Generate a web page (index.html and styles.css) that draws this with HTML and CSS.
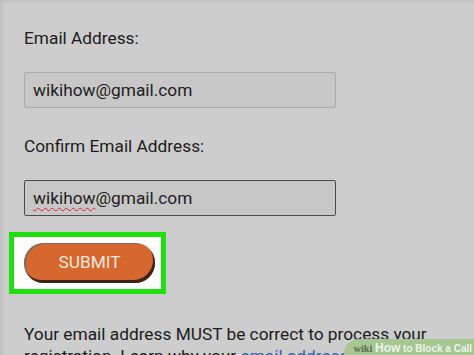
FILE: index.html
```html
<!DOCTYPE html>
<html lang="en">
<head>
<meta charset="utf-8"/>
<meta content="width=device-width, initial-scale=1.0" name="viewport"/>
<title>Register</title>
<link rel="stylesheet" href="styles.css">
</head>
<body>
<div class="page">
<div class="form">
<div class="label">Email Address:</div>
<div class="field">wikihow@gmail.com</div>
<div class="label">Confirm Email Address:</div>
<div class="field focused"><span class="typo">wikihow</span>@gmail.com</div>
<div class="highlight">
<button class="submit">SUBMIT</button>
</div>
<p class="note">Your email address MUST be correct to process your registration. Learn why your <a href="#">email address</a> is important.</p>
</div>
<div class="badge"><span class="wiki">wiki</span> <span class="how">How</span> to Block a Call</div>
</div>
</body>
</html>
```
FILE: styles.css
```css
html, body {
    margin: 0;
    padding: 0;
}
body {
    font-family: Roboto, "Noto Sans", sans-serif;
    background-color: #cdcdcd;
    color: #1c1c1c;
    overflow: hidden;
}
.page {
    position: relative;
    width: 474px;
    height: 355px;
    overflow: hidden;
    box-shadow: inset 3px 2px 3px rgba(0, 0, 0, 0.06);
}
.form {
    padding: 27px 24px 0 24px;
}
.label {
    font-size: 17.3px;
    line-height: 22px;
    margin-bottom: 23px;
}
.field {
    box-sizing: border-box;
    width: 312px;
    height: 36px;
    padding: 0 8px;
    background-color: #c7c7c7;
    border: 1px solid #a9a9a9;
    border-radius: 2px;
    font-size: 17.3px;
    line-height: 34px;
    color: #1e1e1e;
    margin-bottom: 27px;
}
.field.focused {
    border: 1px solid #4a4a4a;
    margin-bottom: 16px;
}
.typo {
    text-decoration: underline wavy #d23;
    text-decoration-thickness: 1px;
    text-underline-offset: 3px;
}
.highlight {
    box-sizing: border-box;
    width: 157px;
    height: 62px;
    margin-left: -15px;
    border: 5px solid #1ee010;
    background-color: #fff;
    padding: 6px 0 0 10px;
}
.submit {
    box-sizing: border-box;
    width: 131px;
    height: 40px;
    border: none;
    border-radius: 20px;
    background-color: #d5672f;
    color: #f6e8dc;
    font-family: Roboto, "Noto Sans", sans-serif;
    font-size: 17.3px;
    box-shadow: inset -2px -3px 0 #3a2418, inset 2px 1px 0 #8a6a5a;
    padding: 0 0 2px 0;
}
.note {
    margin: 30px 0 0 0;
    font-size: 17.3px;
    line-height: 21.5px;
}
.note a {
    color: #3b5fa8;
    text-decoration: none;
}
.badge {
    position: absolute;
    right: -8px;
    bottom: -6px;
    padding: 2px 10px 6px 10px;
    background-color: #a6c692;
    border-top-left-radius: 16px 14px;
    font-family: "Liberation Sans", Arial, sans-serif;
    font-weight: bold;
    font-size: 10px;
    color: #eef4ea;
}
.badge .wiki {
    color: #586a4e;
    font-family: "Liberation Serif", serif;
}
.badge .how {
    font-size: 12px;
}
```
